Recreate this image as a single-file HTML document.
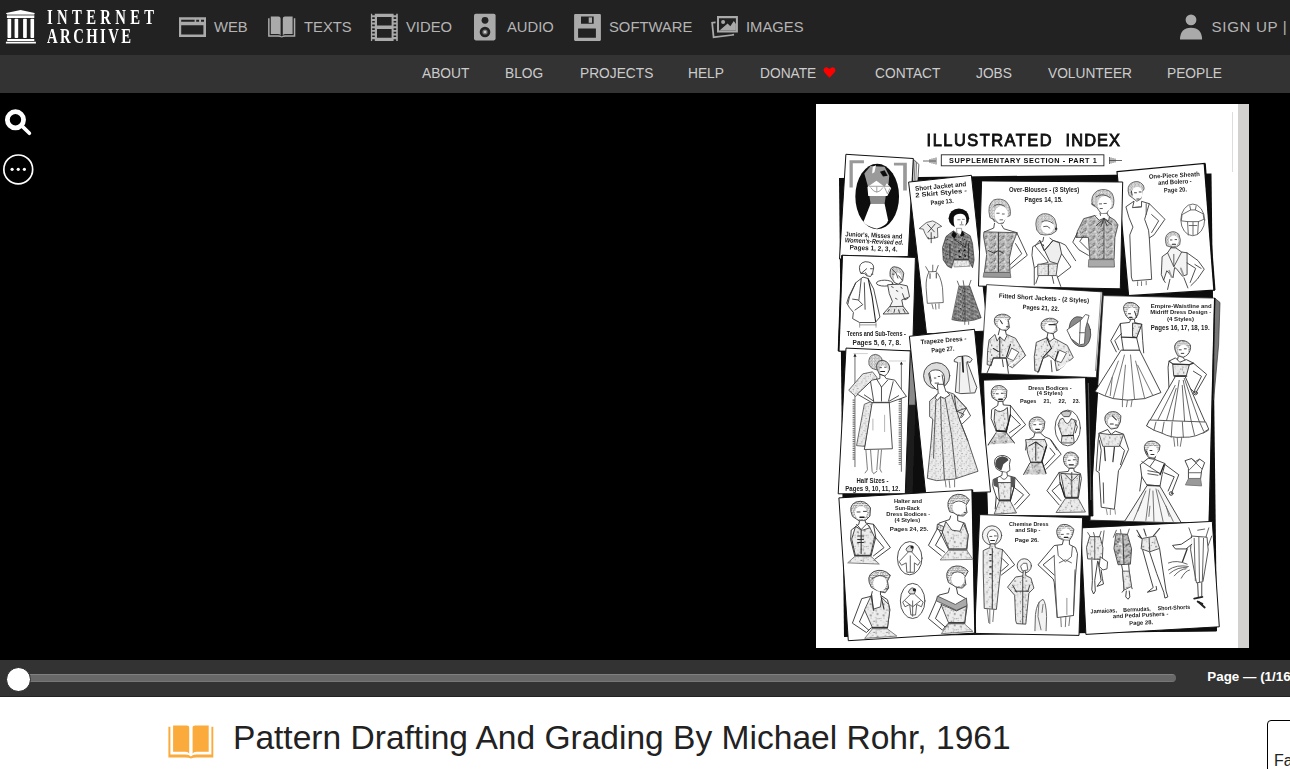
<!DOCTYPE html>
<html lang="en">
<head>
<meta charset="utf-8">
<title>Pattern Drafting And Grading By Michael Rohr, 1961 : Internet Archive</title>
<style>
html,body{margin:0;padding:0;}
body{width:1290px;height:769px;overflow:hidden;background:#fff;position:relative;font-family:"Liberation Sans",Arial,Helvetica,sans-serif;color:#222;}
.abs{position:absolute;white-space:nowrap;}
#nav1{position:absolute;left:0;top:0;width:1290px;height:55px;background:#222;}
#nav2{position:absolute;left:0;top:55px;width:1290px;height:38px;background:#333;}
#nav1 .t{position:absolute;top:18px;font-size:14.8px;line-height:18px;color:#b4b4b4;white-space:nowrap;}
#nav2 .t{position:absolute;top:10px;font-size:13.75px;line-height:18px;color:#ccc;white-space:nowrap;}
#logo span{position:absolute;left:47px;font-family:"Liberation Serif",serif;color:#fff;font-size:21px;font-weight:bold;line-height:24px;white-space:nowrap;transform:scaleX(0.70);transform-origin:0 0;}
#br{position:absolute;left:0;top:93px;width:1290px;height:567px;background:#000;}
#bar{position:absolute;left:0;top:660px;width:1290px;height:36px;background:#333;border-bottom:1px solid #222;}
#track{position:absolute;left:18px;top:13.7px;width:1158px;height:8.4px;border-radius:4.2px;background:linear-gradient(#8a8a8a 0,#686868 1.6px,#686868 6.8px,#8a8a8a 8.4px);}
#knob{position:absolute;left:6px;top:7px;width:23px;height:23px;border-radius:50%;background:#fff;border:1px solid #222;}
#pg{position:absolute;left:1207.3px;top:9.3px;font-size:13.4px;line-height:16px;font-weight:bold;color:#fff;white-space:nowrap;}
#title{position:absolute;left:233px;top:718px;font-size:33.55px;line-height:40px;color:#222;white-space:nowrap;}
#fav{position:absolute;left:1267px;top:720px;width:60px;height:80px;border:1.8px solid #000;border-radius:4px;box-sizing:border-box;font-size:16px;color:#222;}
#fav span{position:absolute;left:6px;top:31.5px;line-height:16px;}
svg{position:absolute;overflow:visible;}
</style>
</head>
<body>
<div id="nav1">
  <svg id="ialogo" style="left:0;top:0" width="44" height="55" viewBox="0 0 44 55">
    <path fill="#fff" d="M20.6 9.9 L34.6 13.1 V14.1 H6.2 V13.1 Z M6.9 15.8 H34.3 V17.9 H6.9 Z M7.2 39 H34.3 V41.1 H7.2 Z M5.9 41.7 H35.9 V43.6 H5.9 Z"/>
    <rect fill="#bdbdbd" x="6.9" y="14.1" width="27.4" height="1.7"/>
    <rect fill="#fff" x="7.5" y="18.7" width="3.7" height="19.4" rx="0.8"/>
    <rect fill="#fff" x="14.6" y="18.7" width="3.6" height="19.4" rx="0.8"/>
    <rect fill="#fff" x="23.1" y="18.7" width="3.7" height="19.4" rx="0.8"/>
    <rect fill="#fff" x="30.5" y="18.7" width="3.6" height="19.4" rx="0.8"/>
  </svg>
  
  <svg style="left:0;top:0" width="1290" height="55" viewBox="0 0 1290 55">
    <g fill="#aaa">
      <!-- web -->
      <path fill-rule="evenodd" d="M179 17.2 H206 V37 H179 Z M181.2 19.7 V21.8 H194.6 V19.7 Z M196.2 19.7 V21.8 H199.1 V19.7 Z M201 19.7 V21.8 H204 V19.7 Z M181.2 25.3 V34.4 H203.4 V25.3 Z"/>
      <!-- texts -->
      <path d="M270.8 16.6 H278.5 Q280.6 16.6 280.6 18.6 V35.2 Q279.8 34 277.6 34 H270.8 Z M292.6 16.6 H284.9 Q282.8 16.6 282.8 18.6 V35.2 Q283.6 34 285.8 34 H292.6 Z"/>
      <path d="M268.1 18.2 H269.6 V35.2 H278.2 Q280.6 35.2 281.7 36.4 Q282.8 35.2 285.2 35.2 H293.8 V18.2 H295.3 V36.8 H285.6 Q283 36.8 281.7 37.6 Q280.4 36.8 277.8 36.8 H268.1 Z"/>
      <!-- video -->
      <path fill-rule="evenodd" d="M370.9 13.8 H397.8 V41 H370.9 Z M377 16.9 V25.6 H391.6 V16.9 Z M377 29 V37.8 H391.6 V29 Z
        M372.2 13.8 h2.6 v1.5 h-2.6 Z M372.2 17.3 h2.6 v1.7 h-2.6 Z M372.2 20.9 h2.6 v1.7 h-2.6 Z M372.2 24.5 h2.6 v1.7 h-2.6 Z M372.2 28.2 h2.6 v1.7 h-2.6 Z M372.2 31.8 h2.6 v1.7 h-2.6 Z M372.2 35.4 h2.6 v1.7 h-2.6 Z M372.2 39.2 h2.6 v1.8 h-2.6 Z
        M393.6 13.8 h2.6 v1.5 h-2.6 Z M393.6 17.3 h2.6 v1.7 h-2.6 Z M393.6 20.9 h2.6 v1.7 h-2.6 Z M393.6 24.5 h2.6 v1.7 h-2.6 Z M393.6 28.2 h2.6 v1.7 h-2.6 Z M393.6 31.8 h2.6 v1.7 h-2.6 Z M393.6 35.4 h2.6 v1.7 h-2.6 Z M393.6 39.2 h2.6 v1.8 h-2.6 Z"/>
      <!-- audio -->
      <rect x="474" y="13.8" width="21.6" height="26.6" rx="1.8"/>
      <!-- software -->
      <path fill-rule="evenodd" d="M575.2 13.9 H599.8 Q600.9 13.9 600.9 15 V39.8 Q600.9 40.9 599.8 40.9 H575.2 Q574.1 40.9 574.1 39.8 V15 Q574.1 13.9 575.2 13.9 Z M581 16.5 V23.7 H593.7 V16.5 Z M578.1 28.4 V37.8 H595.9 V28.4 Z"/>
      <rect x="588.7" y="17.4" width="3.3" height="5.4"/>
      <!-- images -->
      <path fill-rule="evenodd" d="M717 16.1 H737.9 V32.6 H717 Z M719 18.2 V30.5 H735.9 V18.2 Z"/>
      <path d="M719.5 30.5 L727.6 23.4 L730.3 26.2 L733.8 21 L735.9 24 V30.5 Z"/>
      <circle cx="723.1" cy="22" r="2"/>
      <path d="M715.6 21.4 L711.2 22 L712.8 38.2 L734.2 35.6 L733.9 33.8 L732.2 33.9 L732.3 34.2 L714.4 36.2 L713.1 23.5 L715.6 23.2 Z"/>
      <!-- user -->
      <circle cx="1191" cy="19.9" r="5.4"/>
      <path d="M1180 39.6 Q1180 28 1191 27.8 Q1202 28 1202.1 39.6 Z"/>
    </g>
    <circle cx="485" cy="20.3" r="3.4" fill="#222"/>
    <circle cx="485" cy="32" r="5.3" fill="#222"/>
    <circle cx="485" cy="32" r="2.6" fill="#777"/>
    <circle cx="485" cy="32" r="1.3" fill="#ccc"/>
  </svg>
  <div id="logo"><span style="top:5.2px;letter-spacing:6.2px">INTERNET</span><span style="top:24.2px;letter-spacing:3.5px">ARCHIVE</span></div>
  <span class="t" style="left:214px">WEB</span>
  <span class="t" style="left:304px">TEXTS</span>
  <span class="t" style="left:406px">VIDEO</span>
  <span class="t" style="left:507px">AUDIO</span>
  <span class="t" style="left:609px">SOFTWARE</span>
  <span class="t" style="left:746px">IMAGES</span>
  <span class="t" style="left:1211.6px;font-size:15.2px;letter-spacing:0.6px">SIGN UP | <span style="color:#428bca">LOG IN</span></span>
</div>
<div id="nav2">
  <span class="t" style="left:422px">ABOUT</span>
  <span class="t" style="left:505px">BLOG</span>
  <span class="t" style="left:580px">PROJECTS</span>
  <span class="t" style="left:688px">HELP</span>
  <span class="t" style="left:760px">DONATE</span>
  <svg style="left:823px;top:12px" width="13" height="11" viewBox="0 0 24 21"><path fill="#f00" d="M12 20.5 L2.2 10.2 Q-1 5.8 2 2.2 Q6.5 -1.5 12 3.6 Q17.5 -1.5 22 2.2 Q25 5.8 21.8 10.2 Z"/></svg>
  <span class="t" style="left:875px">CONTACT</span>
  <span class="t" style="left:976px">JOBS</span>
  <span class="t" style="left:1048px">VOLUNTEER</span>
  <span class="t" style="left:1167px">PEOPLE</span>
</div>
<div id="br">
  <svg style="left:0;top:0" width="60" height="110" viewBox="0 93 60 110">
    <circle cx="15.45" cy="119.8" r="8.1" fill="none" stroke="#fff" stroke-width="4.8"/>
    <path d="M22.6 126.6 L29.4 133.3" stroke="#fff" stroke-width="3.6" stroke-linecap="round"/>
    <circle cx="18.25" cy="169.4" r="14.4" fill="none" stroke="#fff" stroke-width="1.7"/>
    <circle cx="12.1" cy="169.3" r="1.6" fill="#fff"/><circle cx="18.25" cy="169.3" r="1.6" fill="#fff"/><circle cx="24.4" cy="169.3" r="1.6" fill="#fff"/>
  </svg>
</div>
<svg id="book" style="left:0;top:0" width="1290" height="769" viewBox="0 0 1290 769">
<defs>
  <pattern id="tex" width="3" height="3" patternUnits="userSpaceOnUse">
    <rect width="3" height="3" fill="#b4b4b4"/>
    <circle cx="0.7" cy="0.8" r="0.55" fill="#3a3a3a"/>
    <circle cx="2.2" cy="2.1" r="0.5" fill="#555"/>
    <circle cx="2.3" cy="0.5" r="0.3" fill="#eee"/>
  </pattern>
  <pattern id="texl" width="3" height="3" patternUnits="userSpaceOnUse">
    <rect width="3" height="3" fill="#dcdcdc"/>
    <circle cx="0.7" cy="0.8" r="0.45" fill="#666"/>
    <circle cx="2.2" cy="2.1" r="0.4" fill="#888"/>
  </pattern>
  <filter id="soft" filterUnits="userSpaceOnUse" x="810" y="100" width="445" height="552"><feGaussianBlur stdDeviation="0.3"/></filter>
  <pattern id="T" width="110" height="96" patternUnits="userSpaceOnUse"><rect width="110" height="96" fill="#c4c4c4"/><ellipse cx="36" cy="14" rx="7.3" ry="8.5" fill="#222"/><ellipse cx="10" cy="56" rx="8.5" ry="5.4" fill="#333"/><ellipse cx="48" cy="7" rx="4.5" ry="2.9" fill="#555"/><ellipse cx="62" cy="-5" rx="7.2" ry="9.0" fill="#fff"/><ellipse cx="62" cy="91" rx="7.2" ry="7.2" fill="#fff"/><ellipse cx="44" cy="-2" rx="4.2" ry="2.9" fill="#777"/><ellipse cx="44" cy="94" rx="4.2" ry="3.8" fill="#777"/><ellipse cx="59" cy="55" rx="6.8" ry="4.9" fill="#f4f4f4"/><ellipse cx="64" cy="61" rx="5.9" ry="6.4" fill="#fff"/><ellipse cx="62" cy="59" rx="6.5" ry="5.8" fill="#fff"/><ellipse cx="35" cy="56" rx="6.3" ry="4.8" fill="#444"/><ellipse cx="20" cy="75" rx="4.4" ry="4.3" fill="#444"/><ellipse cx="96" cy="70" rx="5.4" ry="3.7" fill="#222"/><ellipse cx="46" cy="73" rx="4.8" ry="4.3" fill="#555"/><ellipse cx="-4" cy="7" rx="6.8" ry="8.2" fill="#777"/><ellipse cx="106" cy="7" rx="6.8" ry="5.6" fill="#777"/><ellipse cx="76" cy="57" rx="6.9" ry="4.5" fill="#555"/><ellipse cx="10" cy="26" rx="7.5" ry="4.8" fill="#222"/><ellipse cx="77" cy="62" rx="9.0" ry="8.2" fill="#777"/><ellipse cx="79" cy="85" rx="5.7" ry="4.9" fill="#555"/><ellipse cx="67" cy="47" rx="5.1" ry="3.5" fill="#444"/><ellipse cx="27" cy="38" rx="8.4" ry="6.0" fill="#222"/><ellipse cx="44" cy="27" rx="4.7" ry="5.6" fill="#555"/><ellipse cx="31" cy="40" rx="5.8" ry="7.4" fill="#555"/><ellipse cx="17" cy="17" rx="5.2" ry="3.1" fill="#333"/><ellipse cx="91" cy="18" rx="5.4" ry="4.8" fill="#333"/><ellipse cx="41" cy="54" rx="8.8" ry="10.5" fill="#f4f4f4"/><ellipse cx="-5" cy="63" rx="7.7" ry="9.5" fill="#555"/><ellipse cx="105" cy="63" rx="7.7" ry="8.8" fill="#555"/><ellipse cx="96" cy="77" rx="6.0" ry="5.2" fill="#555"/></pattern>
  <pattern id="TL" width="110" height="96" patternUnits="userSpaceOnUse"><rect width="110" height="96" fill="#ececec"/><ellipse cx="53" cy="38" rx="3.7" ry="3.3" fill="#666"/><ellipse cx="12" cy="58" rx="3.4" ry="2.4" fill="#999"/><ellipse cx="11" cy="35" rx="3.1" ry="3.2" fill="#666"/><ellipse cx="16" cy="24" rx="4.2" ry="3.9" fill="#777"/><ellipse cx="13" cy="47" rx="6.4" ry="6.0" fill="#888"/><ellipse cx="9" cy="10" rx="4.2" ry="3.9" fill="#777"/><ellipse cx="76" cy="50" rx="3.7" ry="3.2" fill="#999"/><ellipse cx="76" cy="88" rx="5.7" ry="7.3" fill="#777"/><ellipse cx="95" cy="67" rx="3.9" ry="4.8" fill="#777"/><ellipse cx="39" cy="21" rx="4.9" ry="4.1" fill="#999"/><ellipse cx="25" cy="78" rx="6.4" ry="7.5" fill="#666"/><ellipse cx="90" cy="71" rx="3.8" ry="3.6" fill="#999"/><ellipse cx="80" cy="-1" rx="5.8" ry="4.5" fill="#888"/><ellipse cx="80" cy="95" rx="5.8" ry="6.3" fill="#888"/><ellipse cx="-5" cy="43" rx="6.3" ry="8.0" fill="#777"/><ellipse cx="105" cy="43" rx="6.3" ry="5.4" fill="#777"/><ellipse cx="24" cy="22" rx="3.7" ry="3.5" fill="#666"/><ellipse cx="-2" cy="59" rx="3.0" ry="2.5" fill="#fff"/><ellipse cx="108" cy="59" rx="3.0" ry="3.2" fill="#fff"/><ellipse cx="92" cy="12" rx="4.4" ry="4.9" fill="#fff"/><ellipse cx="53" cy="17" rx="5.8" ry="3.8" fill="#777"/><ellipse cx="104" cy="69" rx="4.6" ry="5.8" fill="#fff"/><ellipse cx="80" cy="16" rx="3.4" ry="3.5" fill="#666"/></pattern>
  <pattern id="H" width="46" height="40" patternUnits="userSpaceOnUse"><rect width="46" height="40" fill="#f4f4f4"/><path d="M2 14 Q10 0 20 12 M24 10 Q34 -2 44 12 M8 34 Q18 20 28 32 M30 30 Q38 20 46 32" fill="none" stroke="#4a4a4a" stroke-width="6" stroke-linecap="round"/></pattern>
  <pattern id="TD" width="110" height="96" patternUnits="userSpaceOnUse"><rect width="110" height="96" fill="#8c8c8c"/><ellipse cx="50" cy="54" rx="8.6" ry="7.9" fill="#444"/><ellipse cx="94" cy="18" rx="8.0" ry="8.3" fill="#444"/><ellipse cx="87" cy="9" rx="5.5" ry="5.4" fill="#111"/><ellipse cx="98" cy="61" rx="7.0" ry="8.9" fill="#444"/><ellipse cx="72" cy="59" rx="4.8" ry="5.7" fill="#111"/><ellipse cx="7" cy="3" rx="8.4" ry="5.2" fill="#ddd"/><ellipse cx="7" cy="99" rx="8.4" ry="7.8" fill="#ddd"/><ellipse cx="117" cy="3" rx="8.4" ry="7.6" fill="#ddd"/><ellipse cx="117" cy="99" rx="8.4" ry="10.0" fill="#ddd"/><ellipse cx="57" cy="61" rx="6.5" ry="4.3" fill="#eee"/><ellipse cx="72" cy="39" rx="6.8" ry="4.4" fill="#666"/><ellipse cx="28" cy="73" rx="6.6" ry="4.3" fill="#111"/><ellipse cx="84" cy="38" rx="8.2" ry="5.3" fill="#444"/><ellipse cx="2" cy="66" rx="5.1" ry="4.7" fill="#111"/><ellipse cx="112" cy="66" rx="5.1" ry="6.5" fill="#111"/><ellipse cx="44" cy="7" rx="7.1" ry="7.7" fill="#666"/><ellipse cx="44" cy="103" rx="7.1" ry="6.0" fill="#666"/><ellipse cx="34" cy="1" rx="6.1" ry="4.2" fill="#111"/><ellipse cx="34" cy="97" rx="6.1" ry="6.6" fill="#111"/><ellipse cx="1" cy="45" rx="6.4" ry="6.4" fill="#eee"/><ellipse cx="111" cy="45" rx="6.4" ry="5.9" fill="#eee"/><ellipse cx="21" cy="70" rx="4.7" ry="4.0" fill="#eee"/><ellipse cx="43" cy="-1" rx="4.0" ry="5.1" fill="#666"/><ellipse cx="43" cy="95" rx="4.0" ry="4.7" fill="#666"/><ellipse cx="33" cy="85" rx="5.1" ry="6.6" fill="#444"/><ellipse cx="66" cy="55" rx="4.2" ry="3.2" fill="#222"/><ellipse cx="28" cy="74" rx="5.6" ry="4.9" fill="#333"/><ellipse cx="8" cy="20" rx="7.2" ry="7.3" fill="#111"/><ellipse cx="41" cy="44" rx="8.8" ry="10.4" fill="#444"/><ellipse cx="15" cy="37" rx="7.1" ry="8.8" fill="#333"/><ellipse cx="90" cy="24" rx="4.9" ry="5.1" fill="#eee"/><ellipse cx="61" cy="66" rx="5.9" ry="6.1" fill="#444"/><ellipse cx="46" cy="10" rx="4.2" ry="3.2" fill="#333"/><ellipse cx="78" cy="25" rx="8.1" ry="7.7" fill="#ddd"/><ellipse cx="57" cy="-7" rx="8.9" ry="6.8" fill="#222"/><ellipse cx="57" cy="89" rx="8.9" ry="8.8" fill="#222"/><ellipse cx="94" cy="59" rx="5.4" ry="6.1" fill="#222"/><ellipse cx="8" cy="39" rx="5.2" ry="3.8" fill="#111"/><ellipse cx="41" cy="55" rx="4.7" ry="3.2" fill="#333"/></pattern>
</defs>
<g filter="url(#soft)">
<rect x="816" y="104" width="433" height="544" fill="#fff"/>
<rect x="1238" y="104" width="11" height="544" fill="#d3d1cf"/>
<rect x="1232" y="112" width="1" height="60" fill="#ddd"/>
<g font-family="'Liberation Sans',sans-serif" font-size="16.4" fill="#111" stroke="#111" stroke-width="0.85">
<text x="926.6" y="146.3" textLength="125" lengthAdjust="spacing">ILLUSTRATED</text>
<text x="1065.6" y="146.3" textLength="54.4" lengthAdjust="spacing">INDEX</text>
</g>
<rect x="941.3" y="154.8" width="162.6" height="11" fill="#fff" stroke="#222" stroke-width="0.9"/>
<text x="949" y="163.1" font-family="'Liberation Sans',sans-serif" font-weight="bold" font-size="7.3" fill="#111" textLength="147.8" lengthAdjust="spacing">SUPPLEMENTARY SECTION - PART 1</text>
<path d="M923 161 H936 M930 159 V163 M932 158.5 V163.5 M934 158 V164 M936 157.5 V164.5" stroke="#444" stroke-width="0.8" fill="none"/>
<path d="M1109 160.5 H1122 M1115 158.5 V162.5 M1113 158 V163 M1111 157.5 V163.5 M1109.5 157 V164" stroke="#444" stroke-width="0.8" fill="none"/>
<polygon points="839,178 1211.5,173.6 1217,631 844,637" fill="#0a0a0a"/>
<g fill="#fff" stroke="#111" stroke-width="0.9" stroke-linejoin="miter">
</g>
<g transform="translate(830 150) scale(0.078)">
  <path d="M1070 120 L1140 185 L1125 400 L1060 400 Z" fill="#fff" stroke="#222" stroke-width="9"/>
  <path d="M1090 140 L1080 395 M1110 158 L1100 395" stroke="#555" stroke-width="10" fill="none"/>
</g>
<polygon points="845.9,154.3 913.3,158.5 908.2,256.5 839.5,259" fill="#fff" stroke="#111" stroke-width="1"/>
<g transform="translate(830 150) scale(0.078)">
  <path d="M250 480 V130 H435 V170 H292 V480 Z" fill="#999"/>
  <path d="M985 520 V165 H820 V200 H938 V520 Z" fill="#999"/>
  <ellipse cx="605" cy="595" rx="280" ry="420" fill="#0c0c0c"/>
  <path d="M440 300 L520 205 L700 215 L760 330 L750 440 L700 480 L490 480 Z" fill="#9a9a9a"/>
  <path d="M548 215 L590 195 L570 285 L540 300 Z" fill="#fff"/>
  <path d="M640 280 L700 260 L740 330 L680 340 Z" fill="#111"/>
  <path d="M595 395 L700 470 L730 425 L785 490 L735 590 L490 590 L480 475 Z" fill="#fff"/>
  <path d="M500 465 H770 M600 470 V540 M520 480 Q600 600 680 480 M700 480 L735 560 L770 490" stroke="#777" stroke-width="9" fill="none"/>
  <path d="M505 590 H715 L700 690 H520 Z" fill="#8c8c8c"/>
  <path d="M520 690 H700 L745 900 Q740 960 600 1010 Q450 970 430 920 Z" fill="#fff"/>
</g>
<g font-family="'Liberation Sans',sans-serif" font-weight="bold" font-size="6.6" fill="#222">
  <text transform="translate(845.3 236.2) rotate(2.6)" textLength="57" lengthAdjust="spacingAndGlyphs">Junior's, Misses and</text>
  <text transform="translate(844.8 242.2) rotate(2.6)" textLength="58.5" lengthAdjust="spacingAndGlyphs" font-style="italic">Women's-Revised ed.</text>
  <text transform="translate(849.5 249.4) rotate(2.6)" textLength="48" lengthAdjust="spacingAndGlyphs">Pages 1, 2, 3, 4.</text>
</g>
<polygon points="842.1,255.3 915.4,257.4 919.5,262 916,351 838.6,351.1" fill="#111" stroke="#111" stroke-width="0.8"/>
<polygon points="842.1,255.3 915.4,257.4 912.6,351 838.6,351.1" fill="#fff" stroke="#111" stroke-width="1"/>
<path d="M842.1 255.3 L838.6 351.1" stroke="#111" stroke-width="1.8" fill="none"/>
<g transform="translate(830 250) scale(0.078)" stroke-linejoin="round" stroke-linecap="round" fill="none" stroke="#333" stroke-width="11">
  <path d="M380 260 Q360 170 450 150 Q560 150 560 230 L545 300 L520 340 L470 330 L440 300 L400 300 Z" fill="#fff"/>
  <path d="M400 300 L470 240 M455 290 L475 320 M520 240 h25 M530 310 h20"/>
  <path d="M420 350 L330 420 L240 600 L215 680 L250 740 L300 800 L290 880 L380 930 L580 930 L640 860 L560 500 L490 370 Z" fill="#fff"/>
  <path d="M330 420 L250 600 L230 690 M400 370 L380 560 L370 640 M440 420 L450 760 M290 630 L360 640 L420 700 L320 770" />
  <path d="M490 370 L540 600 L585 920" stroke="#222" stroke-width="14"/>
  <path d="M380 935 V990 M590 935 V990 M385 960 H590" stroke="#666" stroke-width="8"/>
  <path d="M770 330 Q760 220 820 215 Q920 220 945 300 L930 400 L880 440 L830 420 L800 380 Z" fill="url(#H)"/><ellipse cx="867" cy="357" rx="50" ry="68" fill="#fff" stroke="none"/>
  <path d="M800 250 L850 300 L870 360 M880 330 L920 380 M800 310 h20"/>
  <ellipse cx="700" cy="425" rx="105" ry="38" fill="#fff"/>
  <path d="M740 450 L760 560 L800 660 L760 740 L940 740 L920 640 L1020 600 L990 460 L900 440 Z" fill="#f4f4f4"/>
  <path d="M790 470 l20 10 M910 480 l15 10 M850 520 l20 10 M840 620 l20 10 M930 560 L960 640 L1000 620"/>
</g>
<g transform="translate(830 300) scale(0.078)" stroke-linejoin="round" stroke-linecap="round" fill="none" stroke="#333" stroke-width="11">
  <path d="M760 90 L680 180 L1010 175 L940 85 Z" fill="url(#TL)"/>
  <path d="M740 150 l20 -30 M820 160 l10 -40 M890 165 l-10 -40 M960 160 l-20 -40" stroke="#333"/>
</g>
<g font-family="'Liberation Sans',sans-serif" font-weight="bold" font-size="6.6" fill="#222">
  <text x="846.8" y="336.4" textLength="59" lengthAdjust="spacingAndGlyphs">Teens and Sub-Teens -</text>
  <text x="852.6" y="345" textLength="48.4" lengthAdjust="spacingAndGlyphs">Pages 5, 6, 7, 8.</text>
</g>
<polygon points="910.3,350.9 916.6,355 912,494 905.3,493.8" fill="#1a1a1a" stroke="#222" stroke-width="0.8"/>
<polygon points="910.3,350.9 916.6,355 915.2,405 908.4,405" fill="#8a8a8a" stroke="#333" stroke-width="0.6"/>
<polygon points="846,348.1 910.3,350.9 905.3,493.8 838.2,493.8" fill="#fff" stroke="#111" stroke-width="1"/>
<g transform="translate(830 345) scale(0.078)" stroke-linejoin="round" stroke-linecap="round" fill="none" stroke="#333" stroke-width="11">
  <path d="M320 130 V1560 M915 225 V1620" stroke="#555"/>
  <path d="M305 700 V1480 M895 660 V1540" stroke="#777" stroke-width="30" stroke-dasharray="16 12" stroke-linecap="butt"/>
  <path d="M305 110 H480 M760 205 H970" stroke="#aaa" stroke-width="7"/>
  <path d="M300 150 L320 110 L340 150 Z M895 250 L915 215 L935 250 Z" fill="#222" stroke="none"/>
  <path d="M500 250 Q480 130 580 120 Q660 130 670 200 L600 320 L540 300 Z" fill="url(#H)" stroke="#555"/>
  <path d="M540 345 L420 370 L240 580 L330 660 L520 470 L540 720 L440 760 L340 1290 L450 1300 L560 740 L600 420 Z" fill="url(#TL)" stroke="#555"/>
  <path d="M600 300 Q580 200 680 195 Q770 220 765 310 L740 360 L700 400 L640 380 Z" fill="url(#H)"/><ellipse cx="690" cy="324" rx="51" ry="62" fill="#fff" stroke="none"/>
  <path d="M650 340 h50" stroke="#222" stroke-width="14"/>
  <path d="M640 290 h20 M700 285 h20" />
  <path d="M640 380 L640 430 L540 450 L350 630 L540 740 L760 740 L980 660 L830 450 L720 430 L700 400 Z" fill="#fff"/>
  <path d="M600 440 L660 540 L740 450 M660 540 V720 M520 470 L560 720 M810 470 L750 720 M440 640 L560 720 M880 650 L760 720 M560 735 H760" />
  <path d="M545 740 H760 L800 1330 L445 1340 Z" fill="#fff"/>
  <path d="M550 950 V1090 M700 900 V1110" stroke="#aaa"/>
  <path d="M460 1345 L480 1600 L450 1640 M520 1345 L540 1620 L560 1650 L600 1620 M620 1345 L600 1600 M660 1345 L640 1590 L660 1630" stroke="#666"/>
</g>
<g font-family="'Liberation Sans',sans-serif" font-weight="bold" font-size="6.6" fill="#222">
  <text x="856.5" y="482.5" textLength="32" lengthAdjust="spacingAndGlyphs">Half Sizes -</text>
  <text x="845.2" y="491.2" textLength="55" lengthAdjust="spacingAndGlyphs">Pages 9, 10, 11, 12.</text>
</g>
<polygon points="1117,171.7 1204.7,163.5 1214.4,290.2 1128.6,295.7" fill="#fff" stroke="#111" stroke-width="1.2"/>
<path d="M1204.7 163.5 L1214.4 290.2" stroke="#111" stroke-width="2.2" fill="none"/>
<g font-family="'Liberation Sans',sans-serif" font-weight="bold" font-size="6.4" fill="#222">
  <text transform="translate(1148.9 178.8) rotate(-3)" textLength="51" lengthAdjust="spacingAndGlyphs">One-Piece  Sheath</text>
  <text transform="translate(1158.3 184.9) rotate(-3)" textLength="33.5" lengthAdjust="spacingAndGlyphs">and Bolero -</text>
  <text transform="translate(1164.1 192.6) rotate(-3)" textLength="23" lengthAdjust="spacingAndGlyphs">Page 20.</text>
</g>
<g transform="translate(1115 160) scale(0.078)" stroke-linejoin="round" stroke-linecap="round" fill="none" stroke="#333" stroke-width="11">
  <path d="M180 450 Q140 330 220 290 Q300 250 360 320 Q390 380 350 400 L330 500 L280 530 L230 490 Z" fill="url(#H)" stroke="#555"/><ellipse cx="285" cy="426" rx="68" ry="84" fill="#fff" stroke="none"/>
  <path d="M250 420 h25 M310 410 h25 M280 500 h30 M210 400 L220 450" stroke="#333" stroke-width="12"/>
  <path d="M240 530 L140 600 L180 740 L230 860 L190 960 L210 1500 L225 1550 L470 1530 L440 1000 L430 900 L380 760 L440 560 L340 530 L340 600 L230 610 Z" fill="#fff"/>
  <path d="M230 610 L340 600 M400 560 L400 700" stroke="#555" stroke-width="12"/>
  <path d="M440 560 L620 740 L640 760 L500 960 L440 1000 M470 700 L560 780 L470 930" />
  <path d="M290 1560 V1610 M340 1560 V1610 M400 1555 V1600" stroke="#666"/>
  <ellipse cx="997" cy="768" rx="153" ry="203" fill="#fff" stroke="#555"/>
  <path d="M960 590 L970 640 L1030 640 L1040 590 M970 640 L860 700 L850 780 L930 790 L940 960 M1030 640 L1130 690 L1140 760 L1070 790 L1060 950 M930 790 L1070 790 M1000 800 V960 M950 840 h100" stroke="#555"/>
</g>
<g transform="translate(1115 215) scale(0.078)" stroke-linejoin="round" stroke-linecap="round" fill="none" stroke="#333" stroke-width="11">
  <path d="M660 390 Q620 280 690 230 Q760 190 820 250 Q850 320 830 380 L790 410 L720 410 Z" fill="url(#H)" stroke="#555"/><ellipse cx="753" cy="329" rx="62" ry="66" fill="#fff" stroke="none"/>
  <path d="M710 320 h20 M770 315 h20" stroke="#333"/>
  <path d="M735 375 h40" stroke="#222" stroke-width="16"/>
  <path d="M720 410 L715 440" />
</g>
<g transform="translate(1120 245) scale(0.078)" stroke-linejoin="round" stroke-linecap="round" fill="none" stroke="#333" stroke-width="11">
  <path d="M650 40 L610 100 L540 150 L530 380 L560 450 L600 330 L680 420 L700 290 L720 300 L800 400 L860 380 L860 100 L790 90 L720 40 Z" fill="#f4f4f4"/>
  <path d="M610 100 L690 280 L790 90 M690 120 V270" stroke="#444" stroke-width="11"/>
  <path d="M630 330 L660 410 M780 300 L810 380" stroke="#999" stroke-width="22"/>
  <path d="M860 100 L1000 200 L1080 310 L990 440 L910 520 M860 230 L970 300 L900 480 M960 250 L1040 300" />
  <path d="M640 440 L610 570 M820 420 L870 550 M560 450 L580 480" />
</g>
<polygon points="908.6,182.1 971.4,175.3 987.9,331 926.5,333.8" fill="#fff" stroke="#111" stroke-width="1"/>
<g font-family="'Liberation Sans',sans-serif" font-weight="bold" font-size="6.4" fill="#222">
  <text transform="translate(915.2 190.8) rotate(-5.3)" textLength="51.5" lengthAdjust="spacingAndGlyphs">Short  Jacket  and</text>
  <text transform="translate(915.6 197.4) rotate(-5.3)" textLength="51.5" lengthAdjust="spacingAndGlyphs">2  Skirt  Styles  -</text>
  <text transform="translate(930.8 204.9) rotate(-5.3)" textLength="23" lengthAdjust="spacingAndGlyphs">Page 13.</text>
</g>
<g transform="translate(900 210) scale(0.078)" stroke-linejoin="round" stroke-linecap="round">
  <path d="M250 235 L340 160 L420 140 L470 165 L535 210 L480 230 L485 350 L440 360 L360 370 L320 300 L300 250 Z" fill="#eee" stroke="#444" stroke-width="10"/>
  <path d="M350 180 L440 280 M450 180 L360 285 M400 290 V420 M360 350 L370 370 M440 340 L445 360" stroke="#333" stroke-width="11" fill="none"/>
  <ellipse cx="755" cy="105" rx="132" ry="125" fill="#0d0d0d"/>
  <path d="M690 90 Q720 40 800 50 Q860 70 850 160 Q830 230 790 250 L720 250 Q680 200 690 90 Z" fill="#fff"/>
  <path d="M740 125 h30 M800 120 h25 M770 190 h40 M790 150 v25" stroke="#555" stroke-width="9" fill="none"/>
  <path d="M725 240 L730 300 L790 320 L790 240 Z" fill="#fff" stroke="#444" stroke-width="6"/>
  <path d="M680 270 L590 340 L545 480 L555 640 L610 720 L660 745 L690 640 L880 640 L930 740 L950 640 L930 430 L900 330 L800 270 L770 340 L730 300 Z" fill="url(#TD)" stroke="#333" stroke-width="9"/>
  <path d="M680 270 L730 310 L700 370 L660 330 Z M800 265 L830 320 L790 340 L775 330 Z" fill="#111"/>
  <path d="M700 380 L840 480 L850 400 M640 440 V620 M880 430 V620 M690 640 L880 640" stroke="#222" stroke-width="11" fill="none"/>
  <circle cx="760" cy="525" r="12" fill="#111"/><circle cx="830" cy="515" r="12" fill="#111"/>
  <circle cx="765" cy="600" r="12" fill="#111"/><circle cx="835" cy="590" r="12" fill="#111"/>
  <path d="M690 645 L880 645 L900 720 L700 730 Z" fill="url(#TL)" stroke="#555" stroke-width="7"/>
</g>
<g transform="translate(900 262) scale(0.078)" stroke-linejoin="round" stroke-linecap="round">
  <path d="M330 60 L370 130 M420 40 L420 120 M490 45 L460 125" stroke="#444" stroke-width="10" fill="none"/>
  <path d="M370 130 Q330 200 335 330 L350 530 L555 520 L545 330 Q520 170 465 125 Z" fill="#fff" stroke="#444" stroke-width="10"/>
  <path d="M385 150 V210 M465 145 V205" stroke="#333" stroke-width="12" fill="none"/>
  <path d="M410 540 L425 600 M455 540 L460 605 M500 535 L500 595" stroke="#555" stroke-width="10" fill="none"/>
  <path d="M735 245 L760 310 M810 240 L820 305 M910 235 L885 305" stroke="#444" stroke-width="10" fill="none"/>
  <path d="M760 310 L895 310 L1040 715 Q860 790 670 740 Z" fill="url(#TD)" stroke="#333" stroke-width="9"/>
  <path d="M830 320 L835 760" stroke="#333" stroke-width="8" fill="none"/>
  <path d="M830 765 V800 M880 765 V800" stroke="#555" stroke-width="10" fill="none"/>
</g>
<polygon points="981.6,180.9 1122.7,182 1120.3,288.8 978.5,286.1" fill="#fff" stroke="#111" stroke-width="1"/>
<g font-family="'Liberation Sans',sans-serif" font-weight="bold" font-size="6.4" fill="#222">
  <text x="1008.9" y="191.9" textLength="70.3" lengthAdjust="spacingAndGlyphs">Over-Blouses - (3 Styles)</text>
  <text x="1024.5" y="202.4" textLength="38.3" lengthAdjust="spacingAndGlyphs">Pages 14, 15.</text>
</g>
<g transform="translate(975 175) scale(0.078)" stroke-linejoin="round" stroke-linecap="round" fill="none" stroke="#333" stroke-width="11">
  <path d="M190 540 Q150 380 240 320 Q330 290 400 340 Q470 420 450 520 L400 540 L360 620 L300 620 L250 580 Z" fill="url(#H)" stroke="#555"/><ellipse cx="336" cy="498" rx="86" ry="99" fill="#fff" stroke="none"/>
  <path d="M260 470 Q320 440 390 480 L370 600 L310 620 L260 560 Z" fill="#fff" stroke="none"/>
  <path d="M240 400 Q300 350 380 400 M280 490 h30 M350 500 h25 M320 575 h35 M230 560 L250 600" stroke="#444"/>
  <path d="M250 620 L240 680 L120 730 M340 640 L370 690 L540 740" />
  <path d="M790 700 Q750 540 860 500 Q960 480 1020 560 Q1060 650 1040 720 L980 760 L900 770 L840 760 Z" fill="url(#H)" stroke="#555"/><ellipse cx="930" cy="663" rx="84" ry="87" fill="#fff" stroke="none"/>
  <path d="M860 600 Q920 560 1000 620 M880 660 Q930 640 960 680" stroke="#444"/>
  <circle cx="1040" cy="690" r="16" fill="#333" stroke="none"/>
</g>
<g transform="translate(975 235) scale(0.078)" stroke-linejoin="round" stroke-linecap="round" fill="none" stroke="#333" stroke-width="11">
  <path d="M120 -40 L540 -30 L520 20 L480 120 L440 300 L450 480 L120 480 L150 250 L110 20 Z" fill="url(#T)" stroke="#444"/>
  <path d="M300 -30 V470 M170 200 L240 230 L300 200 L360 230" stroke="#333" stroke-width="12"/>
  <path d="M120 480 H450 L460 545 L110 540 Z" fill="#999" stroke="#666"/>
  <path d="M540 -20 L670 260 L460 430 M520 110 L600 240 L450 380" />
  <path d="M880 30 L870 80 L740 150 L730 260 L760 420 L760 640 M960 40 L1000 70 L1100 100 L1160 130 L1290 330" />
  <path d="M830 70 L960 340 L1060 370 L1110 240 L1080 100 L1000 70 L890 200 Z" fill="#eee"/>
  <path d="M830 70 L770 140 L940 350 L830 380 L760 420" fill="none" stroke="#444" stroke-width="11"/>
  <path d="M1000 70 L890 200 M870 120 L880 140" stroke="#333" stroke-width="12"/>
  <path d="M810 375 L1060 370 L1040 520 L810 520 Z" fill="url(#TL)" stroke="#444"/>
  <path d="M940 380 V510" stroke="#333" stroke-width="12"/>
  <path d="M1110 240 L1230 410 L1060 540 M1050 520 L1100 660 M990 530 L1010 620 M810 530 L780 620" />
</g>
<g transform="translate(1040 175) scale(0.078)" stroke-linejoin="round" stroke-linecap="round" fill="none" stroke="#333" stroke-width="11">
  <path d="M670 380 Q640 260 740 200 Q850 160 920 230 Q970 320 930 420 L880 440 L860 490 L780 490 L730 420 Z" fill="url(#H)" stroke="#555"/><ellipse cx="831" cy="368" rx="89" ry="99" fill="#fff" stroke="none"/>
  <path d="M740 360 Q800 330 870 370 L860 480 L790 490 L750 430 Z" fill="#fff" stroke="none"/>
  <path d="M720 280 Q800 220 900 290 M760 370 h30 M820 365 h30 M770 430 h30 M660 370 L700 390" stroke="#444"/>
  <path d="M770 490 L780 540 M860 490 L880 530" />
  <path d="M700 520 L560 560 L480 720 L460 800 L620 800 L640 1080 L950 1080 L960 800 L1000 640 L960 580 L880 530 L820 560 L760 540 Z" fill="url(#T)" stroke="#444"/>
  <path d="M700 520 L760 580 L820 555 L880 590 L890 530" fill="#fff" stroke="#444"/>
  <path d="M820 560 L720 650 M820 560 L780 660 M820 560 L860 650 M820 560 L920 640 M820 600 V1070" stroke="#333" stroke-width="11"/>
  <path d="M630 1085 H950 L955 1180 L625 1180 Z" fill="#aaa" stroke="#666"/>
  <path d="M480 740 L420 860 L500 960 L620 1030 M560 780 L510 850 L620 960" />
</g>
<polygon points="986.6,284.6 1102.6,291.9 1096.3,377.6 981,373.3" fill="#fff" stroke="#222" stroke-width="0.8"/>
<path d="M1101.2 291.7 L1095.4 371" stroke="#555" stroke-width="0.6" fill="none"/>
<g font-family="'Liberation Sans',sans-serif" font-weight="bold" font-size="6.4" fill="#222">
  <text transform="translate(998.8 297.8) rotate(3.2)" textLength="90.3" lengthAdjust="spacingAndGlyphs">Fitted Short Jackets - (2 Styles)</text>
  <text transform="translate(1022.6 309) rotate(3.2)" textLength="36.6" lengthAdjust="spacingAndGlyphs">Pages 21, 22.</text>
</g>
<g transform="translate(978 280) scale(0.1014)" stroke-linejoin="round" stroke-linecap="round" fill="none" stroke="#333" stroke-width="8.8">
  <path d="M170 440 Q140 370 200 345 Q270 320 320 370 L300 400 L310 470 L280 500 L230 490 L200 470 Z" fill="url(#H)" stroke="#444" stroke-width="9"/><ellipse cx="244" cy="433" rx="49" ry="54" fill="#fff" stroke="none"/>
  <path d="M220 400 L240 430 M280 460 h20" stroke="#333" stroke-width="10"/>
  <path d="M215 480 L200 540 M270 500 L280 540" />
  <path d="M630 480 Q600 410 670 385 Q740 360 790 410 L770 440 L780 500 L740 530 L690 520 Z" fill="url(#H)" stroke="#444" stroke-width="9"/><ellipse cx="710" cy="467" rx="51" ry="51" fill="#fff" stroke="none"/>
  <path d="M700 440 h60" stroke="#333" stroke-width="12"/>
  <path d="M690 520 L680 570 M740 530 L750 570" />
  <ellipse cx="1005" cy="510" rx="105" ry="150" transform="rotate(-12 1005 510)" fill="#8a8a8a" stroke="#444" stroke-width="8"/>
  <path d="M880 490 L1010 400 L1060 340 L1095 350 L1060 480 L1050 630 L1000 640 L920 580 Z" fill="#fff" stroke="#555"/>
  <path d="M1010 400 L1000 630 M1000 520 L1050 520" stroke="#555"/>
</g>
<g transform="translate(978 318) scale(0.1014)" stroke-linejoin="round" stroke-linecap="round" fill="none" stroke="#333" stroke-width="8.8">
  <path d="M165 165 L110 215 L95 320 L90 460 L130 470 L150 395 L275 395 L300 470 L340 490 L470 370 L400 250 L370 200 L290 165 L260 225 L215 185 L190 225 Z" fill="url(#TL)" stroke="#333" stroke-width="8"/>
  <path d="M330 300 L290 395 L350 420 L400 340 Z" fill="#fff" stroke="#333" stroke-width="7"/>
  <path d="M215 190 V390 M150 300 L200 330 M320 260 L280 385 M150 395 L275 395" stroke="#222" stroke-width="10"/>
  <path d="M150 400 L90 540 M280 400 L300 545 M240 410 L250 480" />
  <path d="M310 470 L390 410" stroke="#fff" stroke-width="12"/>
  <path d="M680 195 L575 240 L555 380 L560 520 L600 530 L640 400 L700 370 L760 420 L775 520 L800 510 L940 390 L880 270 L750 200 L710 230 Z" fill="url(#TL)" stroke="#333" stroke-width="8"/>
  <path d="M800 320 L765 420 L820 440 L870 350 Z" fill="#fff" stroke="#333" stroke-width="7"/>
  <path d="M680 200 L725 300 L640 390 M790 330 L760 420" stroke="#222" stroke-width="10"/>
  <path d="M640 400 L590 540 M720 420 L730 530" />
  <path d="M800 500 L900 430" stroke="#fff" stroke-width="12"/>
</g>
<polygon points="1214.7,298.1 1220,302.5 1218.6,345 1213.6,400" fill="#777" stroke="#333" stroke-width="0.7"/>
<polygon points="1103.3,295.6 1214.7,298.1 1209.2,523.2 1089.6,520.2" fill="#fff" stroke="#222" stroke-width="0.8"/>
<path d="M1214.7 298.1 L1209.2 523.2" stroke="#111" stroke-width="1.4" fill="none"/>
<path d="M1097.6 385 L1089.6 520.2" stroke="#111" stroke-width="1.6" fill="none"/>
<g font-family="'Liberation Sans',sans-serif" font-weight="bold" font-size="6.4" fill="#222">
  <text x="1150.8" y="308.1" font-size="5.5" textLength="60.8" lengthAdjust="spacingAndGlyphs">Empire-Waistline  and</text>
  <text x="1150.3" y="314.3" font-size="5.5" textLength="60.8" lengthAdjust="spacingAndGlyphs">Midriff Dress Design -</text>
  <text x="1167" y="320.5" font-size="5.5" textLength="27" lengthAdjust="spacingAndGlyphs">(4 Styles)</text>
  <text x="1150.8" y="329.6" textLength="58.8" lengthAdjust="spacingAndGlyphs">Pages 16, 17, 18, 19.</text>
</g>
<g transform="translate(1092 290) scale(0.1014)" stroke-linejoin="round" stroke-linecap="round" fill="none" stroke="#333" stroke-width="8.8">
  <path d="M320 220 Q290 150 350 125 Q420 110 465 170 L450 250 L420 290 L370 290 L340 260 Z" fill="url(#H)" stroke="#444" stroke-width="9"/><ellipse cx="392" cy="223" rx="47" ry="54" fill="#fff" stroke="none"/>
  <path d="M360 235 h20 M420 210 L440 270 M370 270 h25" stroke="#333" stroke-width="10"/>
  <path d="M380 295 L370 320 L280 330 L290 460 L310 600 L470 600 L440 470 L490 340 L420 320 L420 295" fill="#fff"/>
  <path d="M400 330 L400 460 L440 470 L490 340 Z" fill="url(#TL)"/>
  <path d="M290 465 L440 470 M300 600 L470 600" stroke="#333" stroke-width="12"/>
  <path d="M280 330 L185 500 L240 610 M290 430 L225 500 L265 590 M490 340 L500 500 L510 620" />
  <path d="M830 620 Q790 540 850 505 Q920 480 970 540 Q980 600 940 640 L900 665 L850 650 Z" fill="url(#H)" stroke="#444" stroke-width="9"/><ellipse cx="900" cy="597" rx="51" ry="56" fill="#fff" stroke="none"/>
  <path d="M860 590 h20 M910 580 h20 M880 625 h25" stroke="#333" stroke-width="9"/>
  <path d="M850 660 L840 700 L760 720 L760 770 M900 670 L930 700 L1000 730" />
</g>
<g transform="translate(1092 355) scale(0.1014)" stroke-linejoin="round" stroke-linecap="round" fill="none" stroke="#333" stroke-width="8.8">
  <path d="M285 -45 L30 360 L120 400 L210 430 L350 445 L520 430 L680 370 L470 -45 Z" fill="#fff"/>
  <path d="M260 60 L130 400 M320 0 L210 430 M330 100 L300 440 M380 0 L420 440 M430 60 L520 430 M450 100 L600 400 M200 220 L180 400" stroke="#666"/>
  <path d="M300 445 V510 M350 445 L340 510 M395 445 L385 510" stroke="#666"/>
  <path d="M820 30 L760 60 L750 120 L760 350 L800 300 L820 215 L920 215 L930 290 L1020 380 L1130 190 L1000 80 L930 45 L870 70 Z" fill="#fff"/>
  <path d="M800 90 L960 95 L930 205 L810 205 Z" fill="url(#TL)"/>
  <path d="M760 60 L800 90 L960 95 L1000 80 M810 208 L935 208" stroke="#333" stroke-width="11"/>
  <path d="M1000 160 L1080 210 L1010 350" />
  <circle cx="1020" cy="375" r="18" />
  <path d="M820 215 L540 700 L600 730 L700 769 L1100 769 L1150 740 L920 215 Z" fill="#fff"/>
  <path d="M820 300 L610 720 M830 330 L700 760 M860 250 L780 760 M890 300 L920 760 M900 250 L1000 760 M910 230 L1090 750" stroke="#555"/>
  <path d="M140 680 Q100 600 170 565 Q240 540 285 600 L280 660 L250 720 L190 730 Z" fill="url(#H)" stroke="#444" stroke-width="9"/><ellipse cx="207" cy="660" rx="50" ry="57" fill="#fff" stroke="none"/>
  <path d="M200 600 L240 640 M180 680 h30 M230 690 h20" stroke="#333" stroke-width="10"/>
</g>
<g transform="translate(1085 420) scale(0.1014)" stroke-linejoin="round" stroke-linecap="round" fill="none" stroke="#333" stroke-width="8.8">
  <path d="M610 60 Q680 110 760 130 Q850 180 960 170 Q1100 180 1220 90 L1190 20 L640 0 Z" fill="#fff" stroke="#444"/>
  <path d="M700 20 L680 100 M780 20 L760 130 M860 20 L850 170 M960 20 L970 170 M1050 20 L1080 150 M1130 20 L1170 110" stroke="#555"/>
  <path d="M875 175 L885 260 M910 175 L915 255 M955 170 L940 260" stroke="#666"/>
  <path d="M220 95 L140 130 L130 200 L110 500 L140 520 L160 860 L290 880 L330 500 L350 470 L430 290 L380 140 L300 110 L260 140 Z" fill="#fff"/>
  <path d="M140 130 L260 145 L380 140 L340 260 L180 260 Z" fill="url(#TL)" stroke="#444"/>
  <path d="M190 270 L200 400 M290 270 L275 410" stroke="#333" stroke-width="12"/>
  <path d="M140 200 L160 300 L140 500 M340 250 L390 300 L350 440 M180 620 L185 820" />
  <path d="M600 330 Q560 250 620 215 Q690 190 740 250 Q745 300 700 340 L690 380 L630 370 Z" fill="url(#H)" stroke="#444" stroke-width="9"/><ellipse cx="667" cy="310" rx="50" ry="57" fill="#fff" stroke="none"/>
  <path d="M640 300 h20 M650 340 h30 M600 300 L620 340" stroke="#333" stroke-width="10"/>
  <path d="M620 380 L545 440 L560 560 L610 640 L740 650 L760 540 L790 430 L690 390 Z" fill="#fff"/>
  <path d="M560 410 L740 530 M690 390 L640 460 M620 500 L730 520 M620 530 L720 545 M610 640 L740 650" stroke="#444" stroke-width="9"/>
  <path d="M740 540 L780 440" stroke="#222" stroke-width="13"/>
  <path d="M790 440 L925 540 L850 730 M780 520 L880 560 L820 700 M560 560 L540 700" />
  <circle cx="850" cy="725" r="18"/>
  <path d="M610 650 L390 1000 L950 1015 L740 655 Z" fill="#f6f6f6"/>
  <path d="M600 700 L480 990 M640 680 L600 990 M670 700 L680 1000 M700 680 L770 1000 M720 690 L870 1000 M560 800 L520 900 M640 850 L630 950 M800 850 L830 950" stroke="#666"/>
  <path d="M990 400 L1050 380 L1090 410 L1130 385 L1180 420 L1150 500 L1140 580 L1020 580 L1020 480 Z" fill="#fff"/>
  <path d="M1050 380 L1150 480 M1130 390 L1030 490 M1030 520 h110" stroke="#555"/>
  <path d="M1020 580 L990 640 L1150 650 L1140 580 Z" fill="#999" stroke="#777"/>
</g>
<g transform="translate(1085 470) scale(0.1014)" stroke-linejoin="round" stroke-linecap="round" fill="none" stroke="#666" stroke-width="7">
  <path d="M210 385 L220 440 M250 390 L250 440 M295 390 L300 435"/>
</g>
<polygon points="1086,377.6 1091,381 1093,516 1089.5,516" fill="#111" stroke="#111" stroke-width="0.8"/>
<path d="M1088.3 383 L1090.8 500" stroke="#999" stroke-width="0.5" fill="none"/>
<polygon points="983.5,380.1 1086,377.6 1089.5,516 987.6,515.5" fill="#fff" stroke="#111" stroke-width="1"/>
<path d="M1086 377.6 L1089.5 516" stroke="#111" stroke-width="1.8" fill="none"/>
<g font-family="'Liberation Sans',sans-serif" font-weight="bold" font-size="5.3" fill="#222">
  <text x="1028.2" y="389.5" textLength="43.6" lengthAdjust="spacingAndGlyphs">Dress Bodices -</text>
  <text x="1036.8" y="395.3" textLength="25.8" lengthAdjust="spacingAndGlyphs">(4 Styles)</text>
  <text y="403.4"><tspan x="1020" textLength="16.3" lengthAdjust="spacingAndGlyphs">Pages</tspan> <tspan x="1043.4" textLength="7.6" lengthAdjust="spacingAndGlyphs">21,</tspan> <tspan x="1058.6" textLength="7.6" lengthAdjust="spacingAndGlyphs">22,</tspan> <tspan x="1072.8" textLength="7.1" lengthAdjust="spacingAndGlyphs">23.</tspan></text>
</g>
<g transform="translate(980 372) scale(0.1014)" stroke-linejoin="round" stroke-linecap="round" fill="none" stroke="#333" stroke-width="8.8">
  <path d="M120 250 Q90 170 150 140 Q220 115 265 180 L260 250 L230 290 L180 290 Z" fill="url(#H)" stroke="#444" stroke-width="9"/><ellipse cx="192" cy="225" rx="47" ry="52" fill="#fff" stroke="none"/>
  <path d="M160 215 h20 M210 210 h20" stroke="#333" stroke-width="9"/>
  <path d="M185 268 h35" stroke="#222" stroke-width="14"/>
  <path d="M180 295 L175 330 L115 370 L110 460 L160 580 L260 590 L300 420 L300 330 L230 325 L225 295" fill="#fff"/>
  <path d="M150 370 Q200 420 270 350 L280 500 L250 580 L165 580 L140 480 Z" fill="url(#TL)"/>
  <path d="M160 580 L260 590" stroke="#222" stroke-width="16"/>
  <path d="M300 420 L260 580" stroke="#222" stroke-width="12"/>
  <path d="M300 330 L450 520 L300 650 M310 430 L400 520 L290 600" />
  <path d="M160 600 L80 720 M260 600 L340 700" stroke="#333" stroke-width="10"/>
  <path d="M160 600 L260 600 L330 700 L90 715 Z" fill="url(#T)" stroke="none" opacity="0.75"/>
  <path d="M495 560 Q460 480 530 450 Q600 425 640 490 L630 560 L600 600 L540 600 Z" fill="url(#H)" stroke="#444" stroke-width="9"/><ellipse cx="564" cy="535" rx="49" ry="52" fill="#fff" stroke="none"/>
  <path d="M530 520 h20 M585 515 h20" stroke="#333" stroke-width="9"/>
  <path d="M550 565 h35" stroke="#222" stroke-width="13"/>
  <path d="M540 605 L530 640 L460 680 L450 769 M600 605 L640 640 L690 660 L760 769" />
  <path d="M480 680 L560 720 L640 660" stroke="#444" stroke-width="9"/>
  <ellipse cx="865" cy="552" rx="125" ry="176" fill="#fff" stroke="#444" stroke-width="9"/>
  <path d="M800 400 Q860 370 900 400 L880 440 L830 440 Z" fill="#ccc" stroke="#444"/>
  <path d="M790 470 L770 520 L810 630 L800 700 L930 700 L920 620 L950 480 L900 460 Q860 560 820 460 Z" fill="url(#TL)" stroke="#444"/>
  <path d="M810 630 L920 625" stroke="#222" stroke-width="12"/>
  <path d="M930 480 L960 540 L940 600" />
</g>
<g transform="translate(980 440) scale(0.1014)" stroke-linejoin="round" stroke-linecap="round" fill="none" stroke="#333" stroke-width="8.8">
  <path d="M450 0 L470 130 L500 220 L610 220 L640 120 L660 50 L640 0 Z" fill="url(#TL)" stroke="#444"/>
  <path d="M480 60 L550 20 L620 70 M550 30 V200" stroke="#333" stroke-width="10"/>
  <path d="M500 222 L610 222" stroke="#222" stroke-width="13"/>
  <path d="M655 60 L610 210 L650 330" stroke="#222" stroke-width="13"/>
  <path d="M500 225 L430 340 L650 340 L610 225 Z" fill="url(#T)" stroke="none" opacity="0.75"/>
  <path d="M490 230 L430 340" stroke="#333" stroke-width="9"/>
  <path d="M700 0 L800 140 L650 290 M690 80 L740 140 L640 250" />
  <path d="M160 280 Q120 200 170 165 Q240 130 300 190 L290 240 L295 300 L260 320 L210 310 Z" fill="#fff" stroke="#444" stroke-width="9"/>
  <path d="M150 240 Q150 170 220 160 Q280 170 280 200 L230 240 L210 300 Q160 290 150 240 Z" fill="#4a4a4a" stroke="none"/>
  <path d="M220 320 L215 350 L130 390 L125 450 L160 560 L190 600 L300 600 L340 450 L345 370 L270 350 L265 320" fill="#fff"/>
  <path d="M180 420 L310 420 L300 590 L195 590 Z" fill="url(#TL)"/>
  <path d="M130 390 L175 370 L180 470 L135 450 Z M300 360 L345 370 L340 470 L305 460 Z" fill="#555" stroke="none"/>
  <path d="M200 360 Q240 420 270 360" stroke="#555"/>
  <path d="M190 597 L300 597" stroke="#222" stroke-width="11"/>
  <path d="M345 370 L490 540 L360 680 M340 470 L430 540 L340 640" />
  <path d="M190 605 L140 730 L360 720 L300 605 Z" fill="url(#TL)" stroke="#555"/>
  <path d="M340 450 L300 590 M160 560 L150 680" stroke="#333" stroke-width="10"/>
  <path d="M835 240 Q800 160 860 125 Q930 100 970 170 L965 240 L930 280 L880 280 Z" fill="url(#H)" stroke="#444" stroke-width="9"/><ellipse cx="899" cy="213" rx="46" ry="54" fill="#fff" stroke="none"/>
  <path d="M870 200 h20 M920 195 h20" stroke="#333" stroke-width="9"/>
  <path d="M880 245 h40" stroke="#222" stroke-width="14"/>
  <path d="M880 285 L870 310 L780 320 L790 420 L840 570 L970 570 L1000 380 L990 330 L930 310 L925 285" fill="#fff"/>
  <path d="M800 330 L985 340 L965 565 L845 565 Z" fill="url(#TL)"/>
  <path d="M905 320 V560 M840 340 L900 400 M960 350 L910 400" stroke="#444" stroke-width="9"/>
  <path d="M845 572 L965 572" stroke="#222" stroke-width="11"/>
  <path d="M790 420 L835 560" stroke="#222" stroke-width="11"/>
  <path d="M780 320 L660 500 L780 640 M790 430 L710 500 L800 600" />
  <path d="M840 580 L750 715 L1040 710 L970 580 Z" fill="url(#TL)" stroke="#555"/>
</g>
<polygon points="909.4,336.3 974.5,329.3 990.5,491.9 925.7,494" fill="#fff" stroke="#111" stroke-width="1"/>
<g font-family="'Liberation Sans',sans-serif" font-weight="bold" font-size="6.4" fill="#222">
  <text transform="translate(920.7 344.2) rotate(-4.4)" textLength="46" lengthAdjust="spacingAndGlyphs">Trapeze  Dress  -</text>
  <text transform="translate(931.6 352.5) rotate(-4.4)" textLength="23" lengthAdjust="spacingAndGlyphs">Page 27.</text>
</g>
<g transform="translate(900 325) scale(0.078)" stroke-linejoin="round" stroke-linecap="round" fill="none" stroke="#333" stroke-width="11">
  <circle cx="470" cy="650" r="168" fill="#ddd" stroke="#444" stroke-width="12"/>
  <path d="M370 620 Q400 560 500 580 Q580 610 570 720 L560 800 L470 830 L400 760 Z" fill="#fff"/>
  <path d="M380 620 L400 720 M540 640 L560 760 M440 680 h20 M490 660 h20 M450 745 h45" stroke="#333" stroke-width="11"/>
  <path d="M700 440 Q740 390 800 400 Q880 380 925 440 L900 480 L860 470 L985 800 L960 870 L780 880 L710 860 L740 480 L700 470 Z" fill="#f2f2f2"/>
  <path d="M800 410 L810 600" stroke="#222" stroke-width="22"/>
  <path d="M770 480 L760 860 M850 480 L900 860" stroke="#777"/>
</g>
<g transform="translate(900 380) scale(0.078)" stroke-linejoin="round" stroke-linecap="round" fill="none" stroke="#333" stroke-width="11">
  <path d="M480 60 L490 170 L560 210 L590 150 L560 60 Z" fill="#fff"/>
  <path d="M480 180 L380 270 L380 470 L420 500 L400 780 L350 1260 L470 1290 L700 1270 L1000 1170 L870 780 L760 500 L850 360 L690 180 L600 150 L520 210 Z" fill="url(#TL)" stroke="#444"/>
  <path d="M480 180 L450 230 L480 260 L520 215 L570 235 L640 190 L600 150" fill="#fff"/>
  <path d="M520 215 L530 600 L570 1280 M460 260 L440 700 L430 1000 M580 240 L660 700 L720 1260 M660 190 L760 500 L870 780" stroke="#444"/>
  <path d="M700 200 L850 360 L730 400 Z" fill="url(#TL)"/>
  <path d="M850 360 L905 460 L800 560 M730 400 L820 440 L790 480" fill="none"/>
  <path d="M580 1290 L590 1370 M630 1290 L640 1380 M700 1280 L700 1370" stroke="#666"/>
</g>
<polygon points="1158,628.5 1217,625 1216.5,631.5 1160,632" fill="#111"/>
<polygon points="1080.7,527.9 1212.3,521.4 1219.3,626.8 1085.9,634.4" fill="#fff" stroke="#111" stroke-width="1"/>
<g font-family="'Liberation Sans',sans-serif" font-weight="bold" font-size="5.8" fill="#222">
  <text transform="translate(1090.6 613.4) rotate(-2.6)"><tspan x="0" textLength="26.4" lengthAdjust="spacingAndGlyphs">Jamaicas,</tspan> <tspan x="32.8" textLength="27.5" lengthAdjust="spacingAndGlyphs">Bermudas,</tspan> <tspan x="67.3" textLength="32.3" lengthAdjust="spacingAndGlyphs">Short-Shorts</tspan></text>
  <text transform="translate(1112.9 618.2) rotate(-2.6)" textLength="55.5" lengthAdjust="spacingAndGlyphs">and Pedal Pushers -</text>
  <text transform="translate(1129.2 625.2) rotate(-2.6)" textLength="24" lengthAdjust="spacingAndGlyphs">Page 28.</text>
</g>
<g transform="translate(1076 515) scale(0.117)" stroke-linejoin="round" stroke-linecap="round" fill="none" stroke="#333" stroke-width="7.8">
  <path d="M100 150 L125 190 M150 150 L160 185 M215 140 L200 185 M240 135 L225 250" stroke="#555"/>
  <path d="M120 185 L205 185 L230 280 L225 380 L100 375 L90 280 Z" fill="url(#TL)" stroke="#444"/>
  <path d="M160 190 V380" stroke="#555"/>
  <path d="M135 385 L140 560 L135 640 L150 675 L165 650 L160 560 L185 395 M190 400 L215 560 L180 610 L235 590 L225 540 L215 470" />
  <path d="M210 360 L270 400 L265 460 L230 470 L200 440 Z" fill="#fff" stroke="#444"/>
  <path d="M320 190 L345 130 M380 125 L385 160 M455 120 L440 165" stroke="#555"/>
  <path d="M345 160 L440 165 L475 290 L465 420 L360 425 L325 290 Z" fill="url(#T)" stroke="#444"/>
  <path d="M400 170 L410 420" stroke="#333" stroke-width="8"/>
  <path d="M390 430 L400 480 L410 640 L395 660 M450 425 L455 480 L470 600 L480 630" />
  <path d="M400 480 L455 480 L475 610 L415 640 Z" fill="url(#TL)" stroke="#555"/>
  <path d="M430 650 L425 700 L445 720 L460 700 L455 650" />
  <path d="M520 130 L560 200 M580 120 L600 180 M715 115 L660 180" stroke="#444" stroke-width="9"/>
  <path d="M540 170 L560 200 L530 180" />
  <path d="M570 200 L680 180 L715 285 L630 315 L560 290 Z" fill="url(#TL)" stroke="#444"/>
  <path d="M625 200 L630 310" stroke="#444"/>
  <path d="M570 300 L620 480 L660 620 L610 660 L690 640 L685 610 M630 320 L690 500 L750 660 L760 710 L785 700 L770 650 L715 290" />
  <path d="M965 110 L990 180 M1135 110 L1110 190 M1040 130 L1100 120 M1160 180 L1130 260" stroke="#555"/>
  <path d="M990 180 L1120 190 L1130 300 L1100 480 L1085 570 L1030 580 L1000 420 L980 300 Z" fill="#fff" stroke="#444"/>
  <path d="M1010 200 L1020 560 M1050 190 L1055 570 M1090 200 L1080 560" stroke="#555"/>
  <path d="M990 190 L900 250 L825 260 L850 290 L940 290 L990 250" fill="#fff"/>
  <path d="M950 290 L910 400" stroke="#333" stroke-width="11"/>
  <path d="M790 410 Q860 380 950 420 M790 470 Q860 420 960 440 M800 500 Q870 440 950 450 M840 520 Q890 460 940 460 M900 540 Q930 480 970 470" stroke="#555"/>
  <path d="M1040 585 L1045 700 M1075 580 L1075 690" />
  <path d="M1010 715 L1080 700 M1040 740 L1080 760" stroke="#222" stroke-width="16"/>
</g>
<g transform="translate(1076 580) scale(0.117)" stroke-linejoin="round" stroke-linecap="round" fill="none" stroke="#222" stroke-width="16">
  <path d="M1050 190 L1100 235"/>
</g>
<polygon points="979.7,514.6 1082.6,517.7 1079,635.4 974.6,633.4" fill="#fff" stroke="#111" stroke-width="1"/>
<g font-family="'Liberation Sans',sans-serif" font-weight="bold" font-size="6" fill="#222">
  <text x="1009.1" y="526.4" textLength="39.5" lengthAdjust="spacingAndGlyphs">Chemise Dress</text>
  <text x="1015.2" y="532.4" textLength="25.3" lengthAdjust="spacingAndGlyphs">and Slip -</text>
  <text x="1014.8" y="542.1" textLength="24.2" lengthAdjust="spacingAndGlyphs">Page  26.</text>
</g>
<g transform="translate(968 505) scale(0.1014)" stroke-linejoin="round" stroke-linecap="round" fill="none" stroke="#333" stroke-width="8.8">
  <circle cx="237" cy="300" r="95" fill="#f4f4f4" stroke="#444" stroke-width="9"/>
  <path d="M190 300 Q200 240 250 245 Q300 260 295 320 L270 380 L220 380 Z" fill="#fff" stroke="#555"/>
  <path d="M215 310 h20 M260 305 h20" stroke="#333" stroke-width="8"/>
  <path d="M225 350 h35" stroke="#222" stroke-width="12"/>
  <path d="M220 390 L215 420 L150 450 L150 650 L160 1020 L280 1030 L320 660 L340 440 L270 420 L265 390" fill="url(#TL)" stroke="#444"/>
  <path d="M240 430 V1020" stroke="#333" stroke-width="9"/>
  <path d="M215 490 h14 M215 550 h14 M215 610 h14 M215 680 h14" stroke="#222" stroke-width="12"/>
  <path d="M340 440 L400 510 L460 590 L330 690 M340 530 L400 590 L330 650" fill="none"/>
  <path d="M190 1030 L205 1160 M215 1030 L215 1170 M255 1030 L245 1150" stroke="#666"/>
  <circle cx="555" cy="600" r="70" fill="#f4f4f4" stroke="#444" stroke-width="9"/>
  <path d="M520 600 Q540 560 580 575 L590 640 L540 650 Z" fill="#fff" stroke="#555"/>
  <path d="M545 655 L540 700 L470 710 L390 810 L460 890 L470 1140 L480 1170 L570 1175 L600 870 L650 820 L620 720 L570 695 L565 655" fill="url(#TL)" stroke="#444"/>
  <path d="M540 700 V1170 M470 850 L600 850" stroke="#333" stroke-width="9"/>
  <path d="M440 790 L480 860 M610 790 L590 850" />
  <path d="M660 1240 L665 1080 Q680 950 740 930 Q770 960 775 1100 L770 1240" fill="#f2f2f2" stroke="#555"/>
  <path d="M700 960 L690 1100 L720 1230 M740 980 L730 1060" stroke="#666"/>
  <path d="M890 320 Q850 240 910 200 Q980 170 1045 240 L1030 300 L1000 350 L940 345 Z" fill="url(#H)" stroke="#444" stroke-width="9"/><ellipse cx="963" cy="283" rx="53" ry="54" fill="#fff" stroke="none"/>
  <path d="M920 290 h20 M975 285 h20" stroke="#333" stroke-width="8"/>
  <path d="M950 320 h35" stroke="#222" stroke-width="12"/>
  <path d="M940 350 L930 390 L850 400 L690 590 L840 730 L850 760 L880 1110 L1040 1090 L1060 700 L1080 480 L1060 420 L1000 390 L1000 350" fill="#fff"/>
  <path d="M880 400 L890 500 L960 560 L1020 510 L1030 410 M900 570 L960 540 L1020 570 M850 500 L860 760 L880 1110 M1055 640 L1040 1090" stroke="#555"/>
  <path d="M850 500 L740 590 L850 690" />
  <path d="M975 920 V1080" stroke="#888"/>
  <path d="M915 1110 L920 1200 M965 1105 L960 1200 M1005 1100 L995 1190" stroke="#666"/>
</g>
<polygon points="838.9,497.9 972.3,489.8 975.2,633.1 848.3,640.7" fill="#fff" stroke="#111" stroke-width="1"/>
<path d="M972.3 489.8 L975.2 633.1" stroke="#111" stroke-width="1.8" fill="none"/>
<g font-family="'Liberation Sans',sans-serif" font-weight="bold" font-size="5.8" fill="#222">
  <text x="893.9" y="503.3" textLength="28.1" lengthAdjust="spacingAndGlyphs">Halter and</text>
  <text x="895.1" y="509.5" textLength="24.6" lengthAdjust="spacingAndGlyphs">Sun-Back</text>
  <text x="886.3" y="516.2" textLength="43.9" lengthAdjust="spacingAndGlyphs">Dress  Bodices -</text>
  <text x="894.5" y="522" textLength="25.7" lengthAdjust="spacingAndGlyphs">(4 Styles)</text>
  <text x="889.8" y="531.4" textLength="38.6" lengthAdjust="spacingAndGlyphs">Pages 24,  25.</text>
</g>
<g transform="translate(836 488) scale(0.117)" stroke-linejoin="round" stroke-linecap="round" fill="none" stroke="#333" stroke-width="7.8">
  <path d="M140 240 Q100 150 170 120 Q250 95 295 170 L290 240 L250 280 L200 280 Z" fill="url(#H)" stroke="#444" stroke-width="8"/><ellipse cx="213" cy="212" rx="53" ry="56" fill="#fff" stroke="none"/>
  <path d="M180 205 h25 M235 200 h25" stroke="#333" stroke-width="8"/>
  <path d="M205 250 h35" stroke="#222" stroke-width="12"/>
  <path d="M200 285 L195 310 L130 360 L125 440 L160 580 L300 580 L340 420 L320 310 L255 300 L250 285" fill="#fff"/>
  <path d="M170 330 L220 360 L280 320 L330 420 L295 575 L165 575 L135 440 Z" fill="url(#TL)"/>
  <path d="M175 310 L215 355 L265 305 L290 340 L230 360" fill="#fff" stroke="#444"/>
  <path d="M215 360 V560 M185 410 h50 M185 440 h50 M185 465 h50" stroke="#333" stroke-width="9"/>
  <path d="M165 578 L295 578" stroke="#222" stroke-width="10"/>
  <path d="M320 310 L465 510 L330 610 M335 420 L410 510 L320 580" />
  <path d="M160 585 L100 640 L370 650 L300 585 Z" fill="url(#TL)" stroke="#777"/>
  <ellipse cx="630" cy="600" rx="105" ry="142" fill="#fff" stroke="#444" stroke-width="8"/>
  <path d="M600 520 Q630 470 660 510 L650 545 L615 545 Z" fill="#ddd" stroke="#444"/>
  <circle cx="650" cy="505" r="14" fill="#222" stroke="none"/>
  <path d="M615 550 L540 630 L560 660 L600 640 L605 720 L670 720 L670 640 L700 660 L720 630 L650 550 M635 580 V720" stroke="#555"/>
  <path d="M970 200 Q930 110 1000 65 Q1080 30 1140 100 L1110 150 L1120 210 L1090 240 L1040 235 L1010 215 Z" fill="url(#H)" stroke="#444" stroke-width="8"/><ellipse cx="1052" cy="162" rx="57" ry="63" fill="#fff" stroke="none"/>
  <path d="M1000 130 Q1050 90 1100 130 M1095 210 h15" stroke="#444"/>
  <path d="M980 240 L970 270 L880 300 L870 340 L960 520 L1120 520 L1130 400 L1100 300 L1040 280 L1040 240" fill="#fff"/>
  <path d="M940 290 L990 360 L1060 370 L1090 300 L1130 400 L1115 520 L965 520 L910 380 Z" fill="url(#TL)" stroke="#444"/>
  <path d="M870 310 L920 330 L910 370 L865 350 Z" fill="url(#TL)" stroke="#444"/>
  <path d="M960 530 L1120 530" stroke="#222" stroke-width="10"/>
  <path d="M870 340 L790 490 L900 580 M910 380 L850 490 L930 550" />
  <path d="M960 535 L890 615 L1170 610 L1120 535 Z" fill="url(#TL)" stroke="#777"/>
</g>
<g transform="translate(836 560) scale(0.117)" stroke-linejoin="round" stroke-linecap="round" fill="none" stroke="#333" stroke-width="7.8">
  <path d="M300 230 Q250 140 320 100 Q400 65 465 130 L440 180 L450 240 L420 280 L370 270 L330 250 Z" fill="url(#H)" stroke="#444" stroke-width="8"/><ellipse cx="375" cy="200" rx="58" ry="64" fill="#fff" stroke="none"/>
  <path d="M310 160 Q370 110 430 150 M425 245 h15" stroke="#444"/>
  <path d="M310 270 L300 310 L220 330 L140 540 L260 620 L300 580 L440 580 L460 420 L440 340 L380 300 L380 270" fill="#fff"/>
  <path d="M300 310 L320 420 L380 400 L390 320 L450 380 L460 430 L440 575 L310 575 L245 430 Z" fill="url(#TL)" stroke="#444"/>
  <path d="M305 300 L320 430 M385 310 L410 420" stroke="#333" stroke-width="9"/>
  <path d="M310 580 L440 580" stroke="#222" stroke-width="10"/>
  <path d="M245 430 L200 530 L280 600" />
  <path d="M310 590 L245 670 L520 650 L440 590 Z" fill="url(#TL)" stroke="#777"/>
  <ellipse cx="655" cy="350" rx="105" ry="150" fill="#fff" stroke="#444" stroke-width="8"/>
  <path d="M620 270 Q650 210 680 260 L670 290 L635 290 Z" fill="#ddd" stroke="#444"/>
  <circle cx="670" cy="255" r="14" fill="#222" stroke="none"/>
  <path d="M635 295 L570 360 L590 400 L630 380 L640 470 L680 470 L690 380 L730 400 L745 360 L675 295 M655 350 V480 M590 350 L655 400 L720 350" stroke="#555"/>
  <path d="M960 190 Q920 100 990 60 Q1070 30 1130 95 L1100 150 L1110 210 L1080 240 L1030 235 L1000 215 Z" fill="url(#H)" stroke="#444" stroke-width="8"/><ellipse cx="1042" cy="162" rx="57" ry="63" fill="#fff" stroke="none"/>
  <path d="M990 120 Q1040 80 1090 120 M1085 215 h15" stroke="#444"/>
  <path d="M970 240 L960 280 L880 300 L860 340 L790 500 L910 600 L960 540 L1100 540 L1120 400 L1110 330 L1040 290 L1030 240" fill="#fff"/>
  <path d="M870 310 L1020 380 L1115 325 L1120 390 L1030 430 L860 350 Z" fill="#aaa" stroke="#555"/>
  <path d="M900 380 L1030 435 L1115 395 L1100 535 L965 535 Z" fill="url(#TL)" stroke="#444"/>
  <path d="M965 540 L1100 540" stroke="#222" stroke-width="10"/>
  <path d="M900 390 L850 500 L930 570" />
  <path d="M960 548 L900 630 L1170 610 L1100 548 Z" fill="url(#TL)" stroke="#777"/>
</g>
</g>
</svg>

<div id="bar">
  <div id="track"></div>
  <div id="knob"></div>
  <div id="pg">Page — (1/168)</div>
</div>
<svg style="left:0;top:697px" width="260" height="72" viewBox="0 697 260 72">
  <g fill="#faab3c">
    <path d="M173.1 725.6 H186.6 Q189.2 725.6 189.2 728 V753.4 Q188.2 751.8 185.6 751.8 H173.1 Z M208.7 725.6 H195.2 Q192.6 725.6 192.6 728 V753.4 Q193.6 751.8 196.2 751.8 H208.7 Z"/>
    <path d="M168.4 726.8 H170.4 V754.6 H185.4 Q189.4 754.6 190.9 756.4 Q192.4 754.6 196.4 754.6 H211.4 V726.8 H213.3 V757.4 H196.8 Q192.6 757.4 190.9 758.6 Q189.2 757.4 185 757.4 H168.4 Z"/>
  </g>
</svg>
<div id="title">Pattern Drafting And Grading By Michael Rohr, 1961</div>
<div id="fav"><span>Favorite</span></div>
</body>
</html>
